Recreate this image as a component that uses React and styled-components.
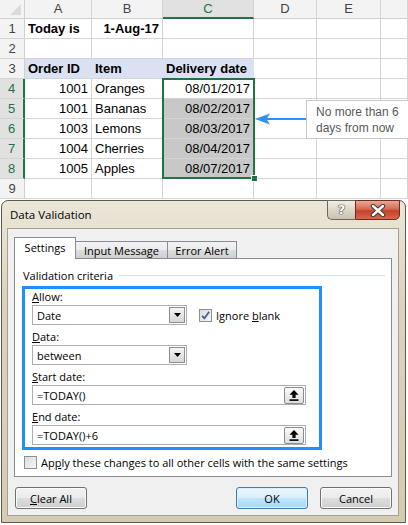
import styled, { createGlobalStyle } from "styled-components";

const GlobalStyle = createGlobalStyle`
  body {
    margin: 0;
    background: #fff;
  }
`;

const COLS = ["A", "B", "C", "D", "E", ""];

// one entry per sheet row, cells A..F
const ROWS = [
  { n: 1, cells: [{ t: "Today is", b: 1 }, { t: "1-Aug-17", b: 1, r: 1 }] },
  { n: 2, cells: [] },
  {
    n: 3,
    cells: [
      { t: "Order ID", b: 1, fill: "blue" },
      { t: "Item", b: 1, fill: "blue" },
      { t: "Delivery date", b: 1, fill: "blue" },
    ],
  },
  { n: 4, sel: 1, cells: [{ t: "1001", r: 1 }, { t: "Oranges" }, { t: "08/01/2017", r: 1 }] },
  { n: 5, sel: 1, cells: [{ t: "1001", r: 1 }, { t: "Bananas" }, { t: "08/02/2017", r: 1, fill: "gray" }] },
  { n: 6, sel: 1, cells: [{ t: "1003", r: 1 }, { t: "Lemons" }, { t: "08/03/2017", r: 1, fill: "gray" }] },
  { n: 7, sel: 1, cells: [{ t: "1004", r: 1 }, { t: "Cherries" }, { t: "08/04/2017", r: 1, fill: "gray" }] },
  { n: 8, sel: 1, cells: [{ t: "1005", r: 1 }, { t: "Apples" }, { t: "08/07/2017", r: 1, fill: "gray" }] },
  { n: 9, cells: [] },
];

export default function App() {
  return (
    <>
      <GlobalStyle />
      <Sheet>
        <Corner />
        {COLS.map((c, i) => (
          <ColHead key={i} $sel={c === "C"}>
            {c}
          </ColHead>
        ))}
        {ROWS.map((row) => (
          <Row key={row.n} row={row} />
        ))}

        <Selection>
          <FillHandle />
        </Selection>

        <Callout>
          <svg width="52" height="40" viewBox="0 0 52 40">
            <line x1="10" y1="20" x2="52" y2="20" stroke="#2f8ff2" strokeWidth="2" />
            <path d="M1 20 L16 14.5 L12.5 20 L16 25.5 Z" fill="#2f8ff2" />
          </svg>
          <Note>
            No more than 6
            <br />
            days from now
          </Note>
        </Callout>
      </Sheet>

      <Window>
        <TitleBar>
          <Title>Data Validation</Title>
          <Caption>
            <HelpBtn>?</HelpBtn>
            <CloseBtn>
              <svg width="16" height="13" viewBox="0 0 16 13">
                <path d="M3 2 L13 11 M13 2 L3 11" stroke="#3b3b3b" strokeWidth="4.4" strokeLinecap="round" />
                <path d="M3 2 L13 11 M13 2 L3 11" stroke="#fff" strokeWidth="2.4" strokeLinecap="round" />
              </svg>
            </CloseBtn>
          </Caption>
        </TitleBar>

        <Client>
          <TabList>
            <Tab $active $w={62}>Settings</Tab>
            <Tab $w={93}>Input Message</Tab>
            <Tab $w={70}>Error Alert</Tab>
          </TabList>

          <Panel>
            <GroupHeader>Validation criteria</GroupHeader>

            <Highlight>
              <Field>
                <Label>
                  <u>A</u>llow:
                </Label>
                <FieldRow>
                  <Combo>
                    Date
                    <ComboArrow>
                      <svg width="7" height="4" viewBox="0 0 7 4">
                        <path d="M0 0 H7 L3.5 4 Z" fill="#000" />
                      </svg>
                    </ComboArrow>
                  </Combo>
                  <CheckLabel>
                    <Check>
                      <svg width="11" height="11" viewBox="0 0 11 11">
                        <path d="M2 5.8 L4.4 8.4 L9.2 1.8" stroke="#4a5f8f" strokeWidth="1.8" fill="none" />
                      </svg>
                    </Check>
                    <span>
                      Ignore <u>b</u>lank
                    </span>
                  </CheckLabel>
                </FieldRow>
              </Field>

              <Field>
                <Label>
                  <u>D</u>ata:
                </Label>
                <Combo>
                  between
                  <ComboArrow>
                    <svg width="7" height="4" viewBox="0 0 7 4">
                      <path d="M0 0 H7 L3.5 4 Z" fill="#000" />
                    </svg>
                  </ComboArrow>
                </Combo>
              </Field>

              <Field>
                <Label>
                  <u>S</u>tart date:
                </Label>
                <RefInput>
                  =TODAY()
                  <CollapseBtn>
                    <UpArrow />
                  </CollapseBtn>
                </RefInput>
              </Field>

              <Field>
                <Label>
                  <u>E</u>nd date:
                </Label>
                <RefInput>
                  =TODAY()+6
                  <CollapseBtn>
                    <UpArrow />
                  </CollapseBtn>
                </RefInput>
              </Field>
            </Highlight>

            <ApplyRow>
              <Check />
              <span>
                Ap<u>p</u>ly these changes to all other cells with the same settings
              </span>
            </ApplyRow>
          </Panel>

          <Buttons>
            <Button>
              <span>
                <u>C</u>lear All
              </span>
            </Button>
            <Spacer />
            <Button $default>OK</Button>
            <Button>Cancel</Button>
          </Buttons>
        </Client>
      </Window>
    </>
  );
}

function Row({ row }) {
  return (
    <>
      <RowHead $sel={row.sel}>{row.n}</RowHead>
      {COLS.map((c, i) => {
        const cell = row.cells[i] || {};
        return (
          <Cell key={i} $bold={cell.b} $right={cell.r} $fill={cell.fill}>
            {cell.t}
          </Cell>
        );
      })}
    </>
  );
}

function UpArrow() {
  return (
    <svg width="10" height="11" viewBox="0 0 10 11">
      <path d="M5 0 L9.5 4.8 H6.6 V8 H3.4 V4.8 H0.5 Z" fill="#000" />
      <rect x="0.5" y="9.3" width="9" height="1.6" fill="#000" />
    </svg>
  );
}

/* ---------- sheet ---------- */

const Sheet = styled.div`
  position: relative;
  display: grid;
  grid-template-columns: 25px 67px 71px 91px 63px 64px 27px;
  grid-template-rows: 19px repeat(9, 20px);
  font-family: "Liberation Sans", Arial, sans-serif;
  font-size: 13px;
  color: #000;
  overflow: hidden;
`;

const Corner = styled.div`
  position: relative;
  background: #f3f3f3;
  border-right: 1px solid #cfcfcf;
  border-bottom: 1px solid #cfcfcf;

  &::after {
    content: "";
    position: absolute;
    right: 3px;
    bottom: 3px;
    border-left: 11px solid transparent;
    border-bottom: 11px solid #dadada;
  }
`;

const ColHead = styled.div`
  box-sizing: border-box;
  background: ${(p) => (p.$sel ? "#e1e1e1" : "#f3f3f3")};
  color: ${(p) => (p.$sel ? "#217346" : "#444")};
  border-right: 1px solid #d4d4d4;
  border-bottom: ${(p) => (p.$sel ? "2px solid #217346" : "1px solid #cfcfcf")};
  text-align: center;
  line-height: 18px;
`;

const RowHead = styled.div`
  box-sizing: border-box;
  background: ${(p) => (p.$sel ? "#e1e1e1" : "#f3f3f3")};
  color: ${(p) => (p.$sel ? "#217346" : "#444")};
  border-right: ${(p) => (p.$sel ? "2px solid #217346" : "1px solid #cfcfcf")};
  border-bottom: 1px solid #d4d4d4;
  text-align: center;
  line-height: 20px;
`;

const fills = {
  blue: { bg: "#d9e1f2", line: "#d9e1f2" },
  gray: { bg: "#c8c8c8", line: "#d9d9d9" },
};

const Cell = styled.div`
  box-sizing: border-box;
  padding: 0 3px;
  background: ${(p) => (p.$fill ? fills[p.$fill].bg : "#fff")};
  border-right: 1px solid ${(p) => (p.$fill ? fills[p.$fill].line : "#d4d4d4")};
  border-bottom: 1px solid #d4d4d4;
  font-weight: ${(p) => (p.$bold ? 700 : 400)};
  text-align: ${(p) => (p.$right ? "right" : "left")};
  line-height: 20px;
  white-space: nowrap;
`;

const Selection = styled.div`
  position: absolute;
  grid-area: 5 / 4 / 10 / 5;
  inset: -1px -1px 0 -1px;
  border: 2px solid #217346;
  pointer-events: none;
`;

const FillHandle = styled.div`
  position: absolute;
  right: -5px;
  bottom: -5px;
  width: 5px;
  height: 5px;
  background: #217346;
  border: 1px solid #fff;
`;

const Callout = styled.div`
  position: absolute;
  grid-area: 6 / 5 / 8 / 8;
  inset: 0 -12px 0 0;
  display: flex;
  align-items: stretch;
`;

const Note = styled.div`
  flex: 1;
  margin-top: 1px;
  padding: 3px 9px 0;
  background: #fff;
  border: 1px solid #c9c9c9;
  color: #595959;
  font-size: 12px;
  line-height: 16px;
`;

/* ---------- dialog ---------- */

const Window = styled.div`
  margin: 1px 0 0 1px;
  width: 405px;
  height: 323px;
  box-sizing: border-box;
  border: 1px solid #5f5a50;
  border-radius: 7px 7px 0 0;
  background: linear-gradient(180deg, #ebe6d8 0%, #dcd4bf 30%, #d4cbb4 100%);
  display: flex;
  flex-direction: column;
  font-family: "Open Sans", "Liberation Sans", sans-serif;
  font-size: 11px;
  color: #000;
`;

const TitleBar = styled.div`
  height: 27px;
  display: flex;
  justify-content: space-between;
  align-items: flex-start;
  padding: 0 5px 0 8px;
`;

const Title = styled.div`
  margin-top: 6px;
  font-size: 11.5px;
  line-height: 16px;
`;

const Caption = styled.div`
  display: flex;
  margin-top: -1px;
`;

const HelpBtn = styled.div`
  width: 28px;
  height: 20px;
  box-sizing: border-box;
  border: 1px solid #6e6656;
  border-right: none;
  border-radius: 0 0 0 5px;
  background: linear-gradient(180deg, #f1eee6 0%, #dcd6c8 50%, #c9c2b1 100%);
  color: #fff;
  font-family: "DejaVu Sans", sans-serif;
  font-weight: 700;
  font-size: 13px;
  line-height: 18px;
  text-align: center;
  text-shadow: 0 0 1px #333, 0 0 1px #333, 0 0 1px #333;
`;

const CloseBtn = styled.div`
  width: 45px;
  height: 20px;
  box-sizing: border-box;
  border: 1px solid #6b2d20;
  border-radius: 0 0 5px 0;
  background: linear-gradient(180deg, #e9a895 0%, #d8694f 45%, #c6412a 55%, #d8674d 100%);
  display: flex;
  align-items: center;
  justify-content: center;
`;

const Client = styled.div`
  flex: 1;
  margin: 0 6px 6px 5px;
  background: #f0f0f0;
  border: 1px solid #a89f8c;
  padding: 8px 6px 0 6px;
  display: flex;
  flex-direction: column;
`;

const TabList = styled.div`
  display: flex;
  align-items: flex-end;
  height: 22px;
  margin-bottom: -1px;
  position: relative;
  z-index: 1;
`;

const Tab = styled.div`
  width: ${(p) => p.$w}px;
  height: ${(p) => (p.$active ? 22 : 18)}px;
  box-sizing: border-box;
  border: 1px solid #898c95;
  border-bottom: ${(p) => (p.$active ? "none" : "1px solid #898c95")};
  background: ${(p) =>
    p.$active ? "#fff" : "linear-gradient(180deg, #f2f2f2 0%, #ebebeb 50%, #dddddd 51%, #cfcfcf 100%)"};
  display: flex;
  align-items: center;
  justify-content: center;
  padding-bottom: ${(p) => (p.$active ? 2 : 0)}px;

  & + & {
    margin-left: -1px;
  }
`;

const Panel = styled.div`
  height: 219px;
  box-sizing: border-box;
  border: 1px solid #898c95;
  background: #fff;
  padding: 9px 6px 0 7px;
`;

const GroupHeader = styled.div`
  display: flex;
  align-items: center;
  gap: 6px;
  height: 14px;
  padding-left: 1px;

  &::after {
    content: "";
    flex: 1;
    height: 1px;
    background: #d5dfe5;
  }
`;

const Highlight = styled.div`
  width: 300px;
  box-sizing: border-box;
  margin-top: 4px;
  border: 3px solid #1e8fff;
  padding: 0 0 2px 7px;
`;

const Field = styled.div`
  & + & {
    margin-top: 4px;
  }
`;

const Label = styled.div`
  height: 16px;
  line-height: 16px;
`;

const FieldRow = styled.div`
  display: flex;
  align-items: center;
  gap: 12px;
`;

const Combo = styled.div`
  width: 155px;
  height: 20px;
  box-sizing: border-box;
  border: 1px solid #abadb3;
  background: #fff;
  display: flex;
  align-items: center;
  justify-content: space-between;
  padding-left: 4px;
`;

const ComboArrow = styled.div`
  width: 16px;
  height: 16px;
  margin-right: 1px;
  box-sizing: border-box;
  border: 1px solid #8e8f8f;
  background: linear-gradient(180deg, #f4f4f4 0%, #e6e6e6 50%, #d6d6d6 100%);
  display: flex;
  align-items: center;
  justify-content: center;
`;

const CheckLabel = styled.div`
  display: flex;
  align-items: center;
  gap: 4px;
`;

const Check = styled.div`
  width: 13px;
  height: 13px;
  box-sizing: border-box;
  border: 1px solid #8f8f8f;
  background: linear-gradient(135deg, #dcdcdc 0%, #f6f6f6 100%);
  display: flex;
  align-items: center;
  justify-content: center;
`;

const RefInput = styled.div`
  width: 274px;
  height: 20px;
  box-sizing: border-box;
  border: 1px solid #abadb3;
  background: #fff;
  display: flex;
  align-items: center;
  justify-content: space-between;
  padding-left: 4px;
`;

const CollapseBtn = styled.div`
  width: 20px;
  height: 17px;
  margin-right: 1px;
  box-sizing: border-box;
  border: 1px solid #8b8b8b;
  border-radius: 2px;
  background: linear-gradient(180deg, #fafafa 0%, #ececec 50%, #dedede 100%);
  display: flex;
  align-items: center;
  justify-content: center;
`;

const ApplyRow = styled.div`
  display: flex;
  align-items: center;
  gap: 4px;
  margin: 6px 0 0 2px;
  height: 13px;
`;

const Buttons = styled.div`
  display: flex;
  gap: 12px;
  margin-top: 10px;
  padding-left: 1px;
`;

const Spacer = styled.div`
  flex: 1;
`;

const Button = styled.div`
  width: 72px;
  height: 22px;
  box-sizing: border-box;
  border: 1px solid ${(p) => (p.$default ? "#3c7fb1" : "#707070")};
  border-radius: 3px;
  box-shadow: inset 0 0 0 1px ${(p) => (p.$default ? "#d8f0fb" : "#fbfbfb")};
  background: ${(p) =>
    p.$default
      ? "linear-gradient(180deg, #eaf6fd 0%, #d9f0fc 50%, #bee6fd 51%, #a7d9f5 100%)"
      : "linear-gradient(180deg, #f2f2f2 0%, #ebebeb 50%, #dddddd 51%, #cfcfcf 100%)"};
  display: flex;
  align-items: center;
  justify-content: center;
`;
